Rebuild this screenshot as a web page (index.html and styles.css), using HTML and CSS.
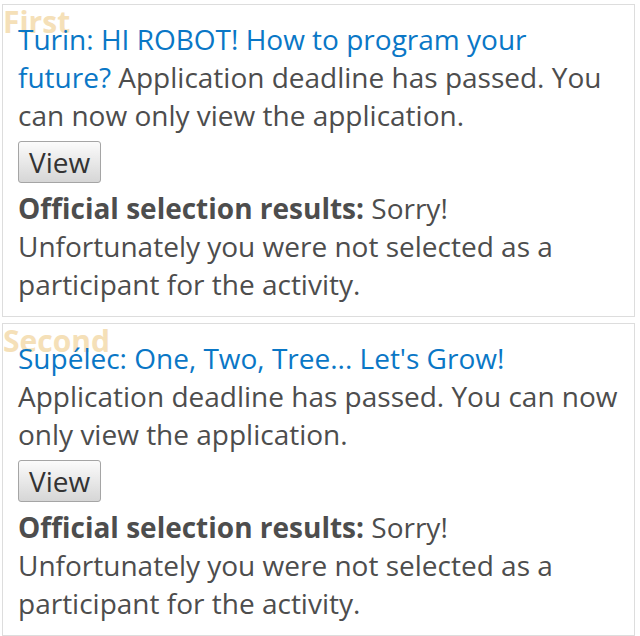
FILE: index.html
```html
<!DOCTYPE html>
<html lang="en">
<head>
    <meta charset="UTF-8">
    <meta name="viewport" content="width=device-width, initial-scale=1.0">
    <title>My applications</title>
    <link rel="stylesheet" href="styles.css">
</head>
<body>
    <div class="activity">
        <span class="rank">First</span>
        <p class="info">
            <a href="#">Turin: HI ROBOT! How to program your future?</a>
            Application deadline has passed. You can now only view the application.
        </p>
        <button class="view-btn">View</button>
        <p class="result"><strong>Official selection results:</strong> Sorry! Unfortunately you were not selected as a participant for the activity.</p>
    </div>

    <div class="activity">
        <span class="rank">Second</span>
        <p class="info">
            <a href="#">Supélec: One, Two, Tree... Let's Grow!</a>
            Application deadline has passed. You can now only view the application.
        </p>
        <button class="view-btn">View</button>
        <p class="result"><strong>Official selection results:</strong> Sorry! Unfortunately you were not selected as a participant for the activity.</p>
    </div>
</body>
</html>
```

FILE: styles.css
```css
body {
    font-family: "Open Sans", "DejaVu Sans", sans-serif;
    font-size: 28px;
    line-height: 38px;
    color: #4d4d4d;
    background: #fff;
    margin: 0;
    padding: 4px 5px 0 2px;
}
.activity {
    position: relative;
    border: 1px solid #ddd;
    padding: 15px 15px 13px;
    margin-bottom: 6px;
}
.rank {
    position: absolute;
    top: 2px;
    left: 0;
    font-size: 30px;
    font-weight: bold;
    line-height: 30px;
    color: #f5e0b8;
}
.info,
.result {
    margin: 0;
    position: relative;
}
.info a {
    color: #0a77c6;
    text-decoration: none;
}
.result strong {
    font-weight: bold;
}
.view-btn {
    display: block;
    margin: 7px 0 6px;
    height: 42px;
    padding: 0 10px;
    font-family: inherit;
    font-size: 28px;
    line-height: 40px;
    color: #333;
    background: linear-gradient(to bottom, #fbfbfb, #d6d6d6);
    border: 1px solid #a5a5a5;
    border-radius: 3px;
}
```
